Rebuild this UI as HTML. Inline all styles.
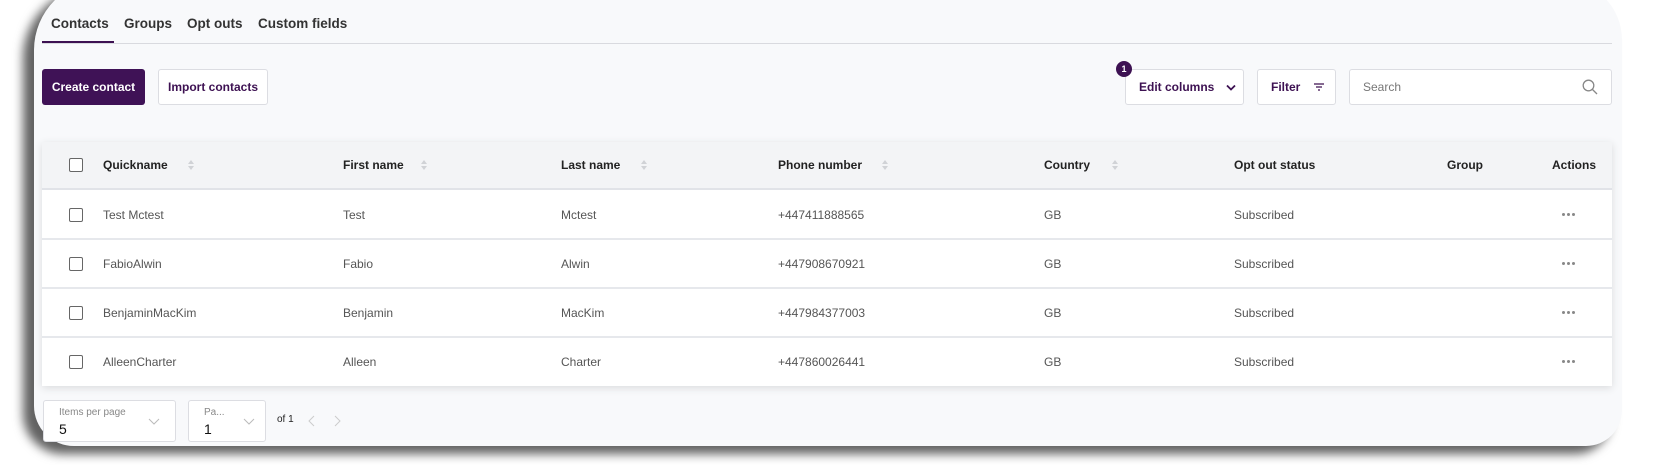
<!DOCTYPE html>
<html><head><meta charset="utf-8"><style>
*{box-sizing:border-box;margin:0;padding:0}
body{width:1658px;height:465px;background:#fff;font-family:"Liberation Sans",sans-serif;position:relative;overflow:hidden}
.panel{position:absolute;left:34px;top:-20px;width:1588px;height:466px;background:#f8f9fb;border-radius:70px 60px 36px 40px;box-shadow:-11px 8px 10px rgba(0,0,0,.62)}
.abs{position:absolute}
.tab{position:absolute;top:16px;font-size:13.5px;font-weight:bold;color:#333}
.btn{position:absolute;top:69px;height:36px;border-radius:3px;font-size:12px;font-weight:bold;display:flex;align-items:center;justify-content:center}
.out{background:#fff;border:1px solid #dcdde2;color:#3d1152}
.table{position:absolute;left:42px;top:142px;width:1570px;height:244px;background:#fff;box-shadow:0 2px 8px rgba(0,0,0,.12)}
.hdr{position:absolute;left:0;top:0;width:100%;height:48px;background:#f3f4f6;border-bottom:2px solid #e1e3e8}
.row{position:absolute;left:0;width:100%;height:49px;border-bottom:2px solid #e6e8ec}
.c{position:absolute;font-size:12px;color:#555;top:50%;transform:translateY(-50%);white-space:nowrap}
.h .c{font-weight:bold;color:#222}
.cb{position:absolute;left:27px;top:50%;margin-top:-7px;width:14px;height:14px;border:1.5px solid #666;border-radius:2px;background:#fff}
.sort{position:absolute;top:50%;margin-top:-5px;width:6px;height:10px}
.dots{position:absolute;left:1520px;top:50%;margin-top:-2px;font-size:0}
.dots i{display:inline-block;width:3px;height:3px;border-radius:50%;background:#888;margin-right:2px}
.sel{position:absolute;top:400px;height:42px;background:#fff;border:1px solid #dcdde2;border-radius:3px}
</style></head><body>
<div class="panel"></div>
<div class="tab" style="left:51px">Contacts</div>
<div class="tab" style="left:124px">Groups</div>
<div class="tab" style="left:187px">Opt outs</div>
<div class="tab" style="left:258px">Custom fields</div>
<div class="abs" style="left:42px;top:43px;width:1570px;height:1px;background:#d9dadf"></div>
<div class="abs" style="left:42px;top:41px;width:72px;height:2px;background:#3d1152"></div>

<div class="btn" style="left:42px;width:103px;background:#3f1256;color:#fff">Create contact</div>
<div class="btn out" style="left:158px;width:110px">Import contacts</div>

<div class="btn out" style="left:1125px;width:119px;justify-content:flex-start;padding-left:13px">Edit columns
<svg width="10" height="7" style="margin-left:12px" viewBox="0 0 10 7"><path d="M1 1.5L5 5.5 9 1.5" stroke="#3d1152" stroke-width="1.8" fill="none"/></svg></div>
<div class="abs" style="left:1116px;top:61px;width:16px;height:16px;border-radius:50%;background:#3d1152;color:#fff;font-size:9px;font-weight:bold;text-align:center;line-height:16px">1</div>
<div class="btn out" style="left:1257px;width:79px;justify-content:flex-start;padding-left:13px">Filter
<svg width="10" height="8" style="margin-left:14px" viewBox="0 0 10 8"><path d="M0 1H10M2 4H8M4 7H6" stroke="#3d1152" stroke-width="1.3"/></svg></div>
<div class="btn out" style="left:1349px;width:263px;justify-content:flex-start;padding-left:13px;font-weight:normal;color:#777">Search
<svg width="16" height="16" style="position:absolute;right:13px;top:9px" viewBox="0 0 16 16"><circle cx="6.5" cy="6.5" r="5.3" stroke="#888" stroke-width="1.3" fill="none"/><path d="M10.5 10.5L15 15" stroke="#888" stroke-width="1.3"/></svg></div>

<div class="table">
 <div class="hdr h">
  <div class="cb"></div>
  <div class="c" style="left:61px">Quickname</div>
  <svg class="sort" style="left:146px" viewBox="0 0 6 10"><path d="M0 4L3 0 6 4ZM0 6L3 10 6 6Z" fill="#d0d2d6"/></svg>
  <div class="c" style="left:301px">First name</div>
  <svg class="sort" style="left:379px" viewBox="0 0 6 10"><path d="M0 4L3 0 6 4ZM0 6L3 10 6 6Z" fill="#d0d2d6"/></svg>
  <div class="c" style="left:519px">Last name</div>
  <svg class="sort" style="left:599px" viewBox="0 0 6 10"><path d="M0 4L3 0 6 4ZM0 6L3 10 6 6Z" fill="#d0d2d6"/></svg>
  <div class="c" style="left:736px">Phone number</div>
  <svg class="sort" style="left:840px" viewBox="0 0 6 10"><path d="M0 4L3 0 6 4ZM0 6L3 10 6 6Z" fill="#d0d2d6"/></svg>
  <div class="c" style="left:1002px">Country</div>
  <svg class="sort" style="left:1070px" viewBox="0 0 6 10"><path d="M0 4L3 0 6 4ZM0 6L3 10 6 6Z" fill="#d0d2d6"/></svg>
  <div class="c" style="left:1192px">Opt out status</div>
  <div class="c" style="left:1405px">Group</div>
  <div class="c" style="left:1510px">Actions</div>
 </div>
 <div class="row" style="top:49px"><div class="cb"></div><div class="c" style="left:61px">Test Mctest</div><div class="c" style="left:301px">Test</div><div class="c" style="left:519px">Mctest</div><div class="c" style="left:736px">+447411888565</div><div class="c" style="left:1002px">GB</div><div class="c" style="left:1192px">Subscribed</div><div class="dots"><i></i><i></i><i></i></div></div>
 <div class="row" style="top:98px"><div class="cb"></div><div class="c" style="left:61px">FabioAlwin</div><div class="c" style="left:301px">Fabio</div><div class="c" style="left:519px">Alwin</div><div class="c" style="left:736px">+447908670921</div><div class="c" style="left:1002px">GB</div><div class="c" style="left:1192px">Subscribed</div><div class="dots"><i></i><i></i><i></i></div></div>
 <div class="row" style="top:147px"><div class="cb"></div><div class="c" style="left:61px">BenjaminMacKim</div><div class="c" style="left:301px">Benjamin</div><div class="c" style="left:519px">MacKim</div><div class="c" style="left:736px">+447984377003</div><div class="c" style="left:1002px">GB</div><div class="c" style="left:1192px">Subscribed</div><div class="dots"><i></i><i></i><i></i></div></div>
 <div class="row" style="top:196px;border-bottom:none;height:48px"><div class="cb"></div><div class="c" style="left:61px">AlleenCharter</div><div class="c" style="left:301px">Alleen</div><div class="c" style="left:519px">Charter</div><div class="c" style="left:736px">+447860026441</div><div class="c" style="left:1002px">GB</div><div class="c" style="left:1192px">Subscribed</div><div class="dots"><i></i><i></i><i></i></div></div>
</div>

<div class="sel" style="left:43px;width:133px">
 <div class="abs" style="left:15px;top:6px;font-size:10px;color:#888">Items per page</div>
 <div class="abs" style="left:15px;top:20px;font-size:14px;color:#111">5</div>
 <svg class="abs" style="left:104px;top:17px" width="12" height="7" viewBox="0 0 12 7"><path d="M1 1L6 6 11 1" stroke="#bbb" fill="none"/></svg>
</div>
<div class="sel" style="left:188px;width:78px">
 <div class="abs" style="left:15px;top:6px;font-size:10px;color:#888">Pa...</div>
 <div class="abs" style="left:15px;top:20px;font-size:14px;color:#111">1</div>
 <svg class="abs" style="left:54px;top:17px" width="12" height="7" viewBox="0 0 12 7"><path d="M1 1L6 6 11 1" stroke="#bbb" fill="none"/></svg>
</div>
<div class="abs" style="left:277px;top:414px;font-size:10px;color:#222">of 1</div>
<svg class="abs" style="left:308px;top:415px" width="8" height="12" viewBox="0 0 8 12"><path d="M6 1L1 6 6 11" stroke="#ccc" fill="none"/></svg>
<svg class="abs" style="left:333px;top:415px" width="8" height="12" viewBox="0 0 8 12"><path d="M2 1L7 6 2 11" stroke="#ccc" fill="none"/></svg>
</body></html>
